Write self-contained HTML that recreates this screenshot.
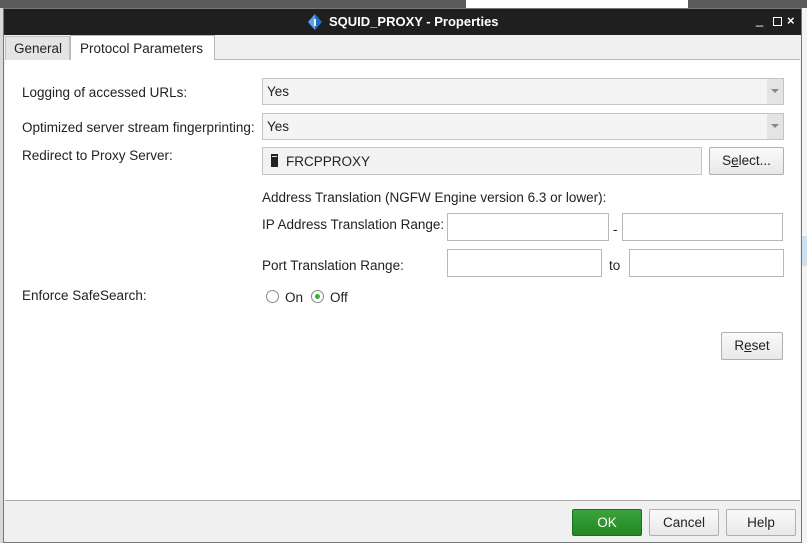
<!DOCTYPE html>
<html><head><meta charset="utf-8"><style>
*{box-sizing:border-box;margin:0;padding:0}
body{width:807px;height:543px;overflow:hidden;background:#fff;font-family:"Liberation Sans",sans-serif;font-size:13.5px;color:#222;position:relative}
.abs{position:absolute}
.lbl{position:absolute;white-space:nowrap}
.inp{position:absolute;border:1px solid #b8b8b8;background:#fff}
.sel{position:absolute;border:1px solid #c4c4c4;background:#f4f4f4}
.sel span{position:absolute;left:4px;top:5px}
.sel i{position:absolute;right:0;top:0;bottom:0;width:16px;background:#e4e4e4}
.sel i:after{content:"";position:absolute;left:4px;top:10px;border-left:4px solid transparent;border-right:4px solid transparent;border-top:4px solid #888}
.btn{position:absolute;border:1px solid #b0b0b0;border-radius:2px;background:linear-gradient(#fafafa,#e8e8e8);text-align:center;line-height:26px}
</style></head><body>
<div class="abs" style="left:0;top:0;width:807px;height:8px;background:#5a5a5a"></div>
<div class="abs" style="left:466px;top:0;width:222px;height:8px;background:#fff"></div>
<div class="abs" style="left:0;top:8px;width:4px;height:535px;background:#d8d8d8"></div>
<div class="abs" style="left:801px;top:8px;width:6px;height:535px;background:#f4f4f4"></div>
<div class="abs" style="left:801px;top:236px;width:6px;height:30px;background:#cfe0f0"></div>
<div class="abs" style="left:3px;top:8px;width:799px;height:535px;border:1px solid #777;background:#f0f0f0"></div>
<div class="abs" style="left:4px;top:9px;width:797px;height:26px;background:#1f1f1f"></div>
<svg class="abs" style="left:307px;top:13px" width="16" height="18" viewBox="0 0 16 18"><path d="M8 1L15 9L8 17L1 9Z" fill="#1c6fc4"/><path d="M8 1L1 9L8 17" fill="#5aa3e6"/><rect x="7" y="6" width="2" height="7" fill="#fff"/></svg>
<div class="lbl" style="left:329px;top:14px;color:#fff;font-weight:bold;font-size:13px">SQUID_PROXY - Properties</div>
<div class="lbl" style="left:756px;top:12px;color:#fff;font-size:13px">_</div>
<div class="abs" style="left:773px;top:17px;width:9px;height:9px;border:1px solid #fff"></div>
<div class="lbl" style="left:787px;top:13px;color:#fff;font-size:13px;font-weight:bold">×</div>
<div class="abs" style="left:5px;top:59px;width:795px;height:1px;background:#b8b8b8"></div>
<div class="abs" style="left:5px;top:36px;width:65px;height:24px;background:#e4e4e4;border:1px solid #c0c0c0;border-bottom:none"></div>
<div class="lbl" style="left:14px;top:41px">General</div>
<div class="abs" style="left:70px;top:35px;height:25px;background:#fff;border:1px solid #b8b8b8;border-bottom:none;width:145px"></div>
<div class="lbl" style="left:80px;top:41px">Protocol Parameters</div>
<div class="abs" style="left:5px;top:60px;width:795px;height:441px;background:#fff;border-bottom:1px solid #a8a8a8"></div>
<div class="lbl" style="left:22px;top:85px">Logging of accessed URLs:</div>
<div class="sel" style="left:262px;top:78px;width:522px;height:27px"><span>Yes</span><i></i></div>
<div class="lbl" style="left:22px;top:120px">Optimized server stream fingerprinting:</div>
<div class="sel" style="left:262px;top:113px;width:522px;height:27px"><span>Yes</span><i></i></div>
<div class="lbl" style="left:22px;top:148px">Redirect to Proxy Server:</div>
<div class="abs" style="left:262px;top:147px;width:440px;height:28px;background:#f2f2f2;border:1px solid #c4c4c4"></div>
<div class="abs" style="left:271px;top:154px;width:7px;height:13px;background:#222"></div>
<div class="abs" style="left:272px;top:156px;width:5px;height:1px;background:#ddd"></div>
<div class="lbl" style="left:286px;top:154px">FRCPPROXY</div>
<div class="btn" style="left:709px;top:147px;width:75px;height:28px">S<u>e</u>lect...</div>
<div class="lbl" style="left:262px;top:190px">Address Translation (NGFW Engine version 6.3 or lower):</div>
<div class="lbl" style="left:262px;top:217px">IP Address Translation Range:</div>
<div class="inp" style="left:447px;top:213px;width:162px;height:28px"></div>
<div class="lbl" style="left:613px;top:222px">-</div>
<div class="inp" style="left:622px;top:213px;width:161px;height:28px"></div>
<div class="lbl" style="left:262px;top:258px">Port Translation Range:</div>
<div class="inp" style="left:447px;top:249px;width:155px;height:28px"></div>
<div class="lbl" style="left:609px;top:258px">to</div>
<div class="inp" style="left:629px;top:249px;width:155px;height:28px"></div>
<div class="lbl" style="left:22px;top:288px">Enforce SafeSearch:</div>
<div class="abs" style="left:266px;top:290px;width:13px;height:13px;border:1px solid #888;border-radius:50%;background:#fff"></div>
<div class="lbl" style="left:285px;top:290px">On</div>
<div class="abs" style="left:311px;top:290px;width:13px;height:13px;border:1px solid #888;border-radius:50%;background:#fff"></div>
<div class="abs" style="left:315px;top:294px;width:5px;height:5px;border-radius:50%;background:#3ab03a"></div>
<div class="lbl" style="left:330px;top:290px">Off</div>
<div class="btn" style="left:721px;top:332px;width:62px;height:28px">R<u>e</u>set</div>
<div class="btn" style="left:572px;top:509px;width:70px;height:27px;background:linear-gradient(#3aa23a,#238a23);border-color:#1d6e1d;color:#fff">OK</div>
<div class="btn" style="left:649px;top:509px;width:70px;height:27px">Cancel</div>
<div class="btn" style="left:726px;top:509px;width:70px;height:27px">Help</div>
</body></html>
